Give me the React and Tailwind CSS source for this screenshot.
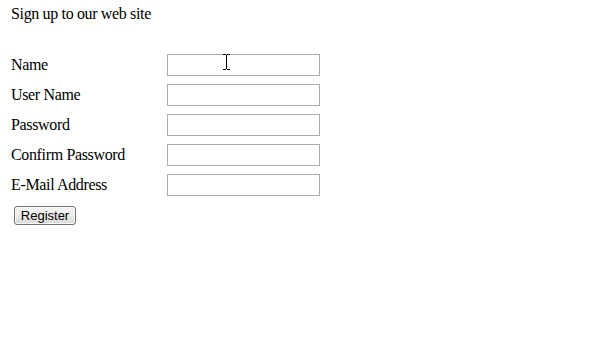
import React from "react";

const rows = ["Name", "User Name", "Password", "Confirm Password", "E-Mail Address"];

export default function App() {
  return (
    <div
      className="relative w-[599px] h-[356px] bg-white text-black pl-[11px] pt-[5px] tracking-[-0.35px]"
      style={{ fontFamily: '"Liberation Serif", "Times New Roman", serif' }}
    >
      <div className="text-[16px] leading-[18px] h-[18px]">Sign up to our web site</div>
      <div className="mt-[27px] flex flex-col">
        {rows.map((r) => (
          <div key={r} className="flex items-center h-[30px]">
            <div className="w-[156px] text-[16px] leading-[18px]">{r}</div>
            <input
              type="text"
              className="box-border w-[153px] h-[22px] border border-[#ababab] bg-white outline-none px-[2px]"
            />
          </div>
        ))}
      </div>
      <button
        className="mt-[6px] ml-[3px] box-border w-[62px] h-[19px] rounded-[3px] border border-[#707070] bg-gradient-to-b from-[#f4f4f4] via-[#ececec] to-[#d9d9d9] text-[13px] leading-[15px] tracking-normal text-black flex items-center justify-center shadow-[inset_0_0_0_1px_#fcfcfc]"
        style={{ fontFamily: '"Liberation Sans", Arial, sans-serif' }}
      >
        Register
      </button>
      <svg
        className="absolute left-[223px] top-[54px]"
        width="7"
        height="16"
        viewBox="0 0 7 16"
        fill="none"
        stroke="#000"
        strokeWidth="1"
        shapeRendering="crispEdges"
      >
        <path d="M0 0.5H3M4 0.5H7M3.5 1V15M0 15.5H3M4 15.5H7" />
      </svg>
    </div>
  );
}
